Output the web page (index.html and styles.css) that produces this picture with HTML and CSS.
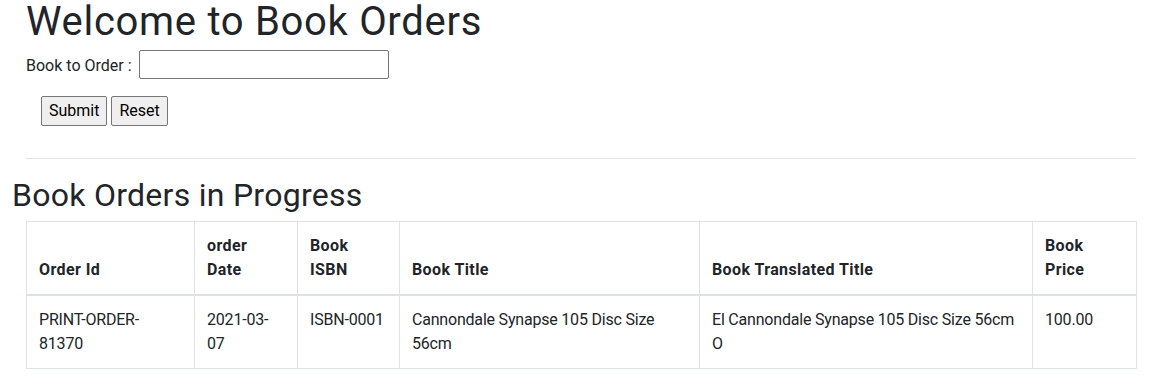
FILE: index.html
```html
<!DOCTYPE html>
<html lang="en">
<head>
<meta charset="utf-8">
<title>Book Orders</title>
<link rel="stylesheet" href="styles.css">
</head>
<body>
<main class="page">
  <section class="order-form">
    <h1 class="title">Welcome to Book Orders</h1>
    <form class="form">
      <div class="field">
        <label class="field-label" for="book">Book to Order :</label>
        <input class="field-input" id="book" type="text">
      </div>
      <div class="actions">
        <button type="submit" class="btn">Submit</button>
        <button type="reset" class="btn">Reset</button>
      </div>
    </form>
    <hr class="divider">
  </section>
  <h2 class="subtitle">Book Orders in Progress</h2>
  <div class="table-wrap">
    <table class="orders">
      <colgroup>
        <col class="c-id">
        <col class="c-date">
        <col class="c-isbn">
        <col class="c-title">
        <col class="c-trans">
        <col class="c-price">
      </colgroup>
      <thead>
        <tr>
          <th>Order Id</th>
          <th>order Date</th>
          <th>Book ISBN</th>
          <th>Book Title</th>
          <th>Book Translated Title</th>
          <th>Book Price</th>
        </tr>
      </thead>
      <tbody>
        <tr>
          <td>PRINT-ORDER-81370</td>
          <td>2021-03-07</td>
          <td class="nowrap">ISBN-0001</td>
          <td>Cannondale Synapse 105 Disc Size 56cm</td>
          <td>El Cannondale Synapse 105 Disc Size 56cm O</td>
          <td>100.00</td>
        </tr>
      </tbody>
    </table>
  </div>
</main>
</body>
</html>
```

FILE: styles.css
```css
* {
  box-sizing: border-box;
}

body {
  margin: 0;
  font-family: Roboto, "Liberation Sans", sans-serif;
  font-size: 16px;
  line-height: 1.5;
  color: #212529;
  background: #fff;
}

.order-form {
  padding: 0 16px 0 26px;
}

.title {
  margin: 0 0 7px;
  font-size: 40px;
  font-weight: 400;
  line-height: 43px;
  letter-spacing: 0.7px;
}

.form {
  margin: 0 0 32px;
}

.field {
  display: flex;
  align-items: center;
  gap: 7px;
}

.field-label {
  margin-top: 3px;
  line-height: 24px;
}

.field-input {
  width: 250px;
  height: 29px;
  border: 1px solid #767676;
  border-radius: 2px;
  padding: 1px 2px;
  font: inherit;
  background: #fff;
}

.actions {
  display: flex;
  gap: 4px;
  margin: 17px 0 0 15px;
}

.btn {
  height: 30px;
  padding: 2px 7px;
  font: inherit;
  line-height: 24px;
  color: #000;
  background: #efefef;
  border: 1px solid #767676;
  border-radius: 2px;
}

.divider {
  height: 0;
  margin: 0 0 16px;
  border: 0;
  border-top: 1px solid rgba(0, 0, 0, 0.1);
}

.subtitle {
  margin: 17px 0 7px 12px;
  font-size: 32px;
  font-weight: 400;
  line-height: 38.4px;
  letter-spacing: 0.27px;
}

.table-wrap {
  margin: 0 16px 0 26px;
}

.orders {
  width: 100%;
  table-layout: fixed;
  border-collapse: collapse;
  border: 1px solid #dee2e6;
}

.c-id { width: 168px; }
.c-date { width: 103px; }
.c-isbn { width: 102px; }
.c-title { width: 300px; }
.c-trans { width: 333px; }
.c-price { width: 104px; }

.orders th,
.orders td {
  padding: 12px;
  border: 1px solid #dee2e6;
  vertical-align: top;
  text-align: left;
}

.orders td {
  letter-spacing: -0.2px;
}

.orders thead th {
  vertical-align: bottom;
  border-bottom-width: 2px;
  font-weight: 700;
  letter-spacing: 0.4px;
}

.nowrap {
  white-space: nowrap;
}
```
